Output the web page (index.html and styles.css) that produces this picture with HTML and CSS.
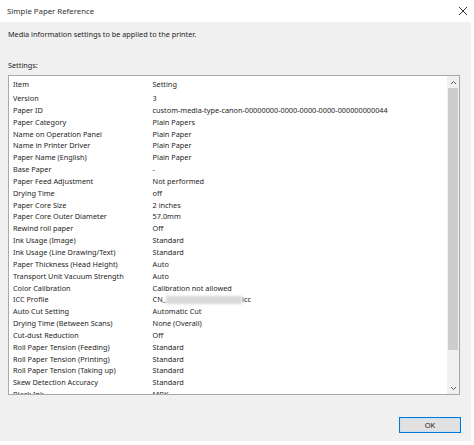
FILE: index.html
```html
<!DOCTYPE html>
<html>
<head>
<meta charset="utf-8">
<link rel="stylesheet" href="styles.css">
</head>
<body>
<div class="window">
  <div class="titlebar">
    <span class="title">Simple Paper Reference</span>
    <svg class="close" width="10" height="10" viewBox="0 0 10 10"><path d="M1 1L9 9M9 1L1 9" stroke="#222" stroke-width="0.9" fill="none"/></svg>
  </div>
  <div class="content">
    <p class="desc">Media information settings to be applied to the printer.</p>
    <p class="label">Settings:</p>
    <div class="listbox">
      <div class="list">
        <div class="row head"><span>Item</span><span>Setting</span></div>
        <div class="rows">
          <div class="row"><span>Version</span><span>3</span></div>
          <div class="row"><span>Paper ID</span><span>custom-media-type-canon-00000000-0000-0000-0000-000000000044</span></div>
          <div class="row"><span>Paper Category</span><span>Plain Papers</span></div>
          <div class="row"><span>Name on Operation Panel</span><span>Plain Paper</span></div>
          <div class="row"><span>Name in Printer Driver</span><span>Plain Paper</span></div>
          <div class="row"><span>Paper Name (English)</span><span>Plain Paper</span></div>
          <div class="row"><span>Base Paper</span><span>-</span></div>
          <div class="row"><span>Paper Feed Adjustment</span><span>Not performed</span></div>
          <div class="row"><span>Drying Time</span><span>off</span></div>
          <div class="row"><span>Paper Core Size</span><span>2 inches</span></div>
          <div class="row"><span>Paper Core Outer Diameter</span><span>57.0mm</span></div>
          <div class="row"><span>Rewind roll paper</span><span>Off</span></div>
          <div class="row"><span>Ink Usage (Image)</span><span>Standard</span></div>
          <div class="row"><span>Ink Usage (Line Drawing/Text)</span><span>Standard</span></div>
          <div class="row"><span>Paper Thickness (Head Height)</span><span>Auto</span></div>
          <div class="row"><span>Transport Unit Vacuum Strength</span><span>Auto</span></div>
          <div class="row"><span>Color Calibration</span><span>Calibration not allowed</span></div>
          <div class="row"><span>ICC Profile</span><span class="icc">CN_<span class="blur"></span>icc</span></div>
          <div class="row"><span>Auto Cut Setting</span><span>Automatic Cut</span></div>
          <div class="row"><span>Drying Time (Between Scans)</span><span>None (Overall)</span></div>
          <div class="row"><span>Cut-dust Reduction</span><span>Off</span></div>
          <div class="row"><span>Roll Paper Tension (Feeding)</span><span>Standard</span></div>
          <div class="row"><span>Roll Paper Tension (Printing)</span><span>Standard</span></div>
          <div class="row"><span>Roll Paper Tension (Taking up)</span><span>Standard</span></div>
          <div class="row"><span>Skew Detection Accuracy</span><span>Standard</span></div>
          <div class="row"><span>Black Ink</span><span>MBK</span></div>
        </div>
      </div>
      <div class="scrollbar">
        <div class="arrow up"><svg width="7" height="5" viewBox="0 0 7 5"><path d="M1 4L3.5 1.5L6 4" stroke="#555" stroke-width="1" fill="none"/></svg></div>
        <div class="track"><div class="thumb"></div></div>
        <div class="arrow down"><svg width="7" height="5" viewBox="0 0 7 5"><path d="M1 1L3.5 3.5L6 1" stroke="#555" stroke-width="1" fill="none"/></svg></div>
      </div>
    </div>
    <div class="footer">
      <button class="ok">OK</button>
    </div>
  </div>
</div>
</body>
</html>
```

FILE: styles.css
```css
html, body {
  margin: 0;
  padding: 0;
  background: #ffffff;
}
body {
  font-family: "Noto Sans", "Open Sans", sans-serif;
  font-size: 7.3px;
  color: #1e1e1e;
}
.window {
  width: 471px;
  height: 441px;
  display: flex;
  flex-direction: column;
}
.titlebar {
  height: 22px;
  background: #ffffff;
  display: flex;
  align-items: center;
  justify-content: space-between;
  padding: 0 6px 0 7px;
  box-sizing: border-box;
  width: 474px;
}
.title {
  font-size: 7.8px;
  color: #333;
}
.content {
  flex: 1;
  background: #f0f0f0;
  display: flex;
  flex-direction: column;
  padding: 0 11px 0 8px;
  box-sizing: border-box;
}
.desc {
  margin: 6px 0 0;
  line-height: 12px;
}
.label {
  margin: 19px 0 0;
  line-height: 12px;
}
.listbox {
  margin-top: 4px;
  height: 320px;
  border: 1px solid #a9a9a9;
  background: #ffffff;
  display: flex;
  box-sizing: border-box;
  overflow: hidden;
}
.list {
  flex: 1;
  overflow: hidden;
}
.row {
  display: grid;
  grid-template-columns: 139.6px 1fr;
  padding-left: 4px;
  line-height: 11.85px;
  white-space: nowrap;
}
.row.head {
  height: 17px;
  line-height: 17px;
}
.icc {
  display: flex;
  align-items: center;
}
.blur {
  display: inline-block;
  width: 76px;
  height: 8px;
  background: #d9d9d9;
  filter: blur(1px);
}
.scrollbar {
  width: 12px;
  background: #f0f0f0;
  display: flex;
  flex-direction: column;
}
.arrow {
  height: 12px;
  display: flex;
  align-items: center;
  justify-content: center;
}
.track {
  flex: 1;
  padding: 0 1px;
}
.thumb {
  height: 262px;
  background: #cdcdcd;
}
.footer {
  display: flex;
  justify-content: flex-end;
  padding-top: 22px;
  margin-right: -1px;
}
.ok {
  width: 62px;
  height: 16px;
  border: 1px solid #0078d7;
  background: #e1e1e1;
  font-family: inherit;
  font-size: 7.6px;
  color: #222;
  padding: 0;
  box-shadow: inset 0 0 0 1px #c8e0f4;
}
```
